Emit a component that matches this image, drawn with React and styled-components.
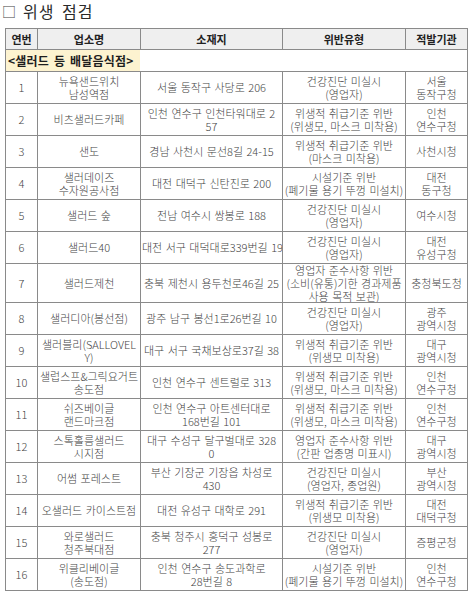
import React from "react";
import styled, { createGlobalStyle } from "styled-components";

const Global = createGlobalStyle`
  html, body { margin: 0; padding: 0; background: #fff; }
  body { font-family: "Noto Sans CJK KR", "Noto Sans", sans-serif; color: #333; }
`;

const Page = styled.div`
  width: 474px;
  padding: 0 0 0 5px;
  box-sizing: border-box;
`;

const Title = styled.h1`
  margin: 0 0 0 -3px;
  height: 28px;
  display: flex;
  align-items: flex-start;
  gap: 7px;
  font-size: 16px;
  line-height: 22px;
  font-weight: 400;
  color: #2a2a2a;
  letter-spacing: 1px;
  word-spacing: 3px;
`;

const Square = styled.span`
  font-size: 14px;
  color: #444;
  letter-spacing: 0;
`;

const Table = styled.table`
  width: 462px;
  table-layout: fixed;
  border-collapse: collapse;
  border: 1px solid #6f6f6f;
  font-size: 11px;
`;

const HeadCell = styled.th`
  height: 20px;
  padding: 0;
  background: #efefef;
  border: 1px solid #8a8a8a;
  font-weight: 700;
  color: #222;
  text-align: center;
  vertical-align: middle;
  line-height: 13px;
`;

const CategoryCell = styled.td`
  height: 21px;
  padding: 0;
  border: 1px solid #8a8a8a;
  text-align: left;
  vertical-align: middle;
  line-height: 13px;
`;

const Highlight = styled.span`
  display: inline-flex;
  align-items: center;
  height: 21px;
  padding: 0 6px 0 2px;
  background: #fdf3d0;
  font-size: 12px;
  font-weight: 700;
  color: #1e1e1e;
  letter-spacing: 0.2px;
  word-spacing: 2px;
  vertical-align: middle;
`;

const Cell = styled.td`
  height: 31px;
  padding: 0 1px;
  border: 1px solid #8a8a8a;
  text-align: center;
  vertical-align: middle;
  line-height: 12.8px;
  font-weight: 300;
  color: #444;
  white-space: nowrap;
  overflow: hidden;
  word-spacing: 1px;
`;

const cols = [32, 103, 142, 123, 62];

const rows = [
  ["1", ["뉴욕샌드위치", "남성역점"], ["서울 동작구 사당로 206"], ["건강진단 미실시", "(영업자)"], ["서울", "동작구청"]],
  ["2", ["비츠샐러드카페"], ["인천 연수구 인천타워대로 2", "57"], ["위생적 취급기준 위반", "(위생모, 마스크 미착용)"], ["인천", "연수구청"]],
  ["3", ["샌도"], ["경남 사천시 문선8길 24-15"], ["위생적 취급기준 위반", "(마스크 미착용)"], ["사천시청"]],
  ["4", ["샐러데이즈", "수자원공사점"], ["대전 대덕구 신탄진로 200"], ["시설기준 위반", "(폐기물 용기 뚜껑 미설치)"], ["대전", "동구청"]],
  ["5", ["샐러드 숲"], ["전남 여수시 쌍봉로 188"], ["건강진단 미실시", "(영업자)"], ["여수시청"]],
  ["6", ["샐러드40"], ["대전 서구 대덕대로339번길 19"], ["건강진단 미실시", "(영업자)"], ["대전", "유성구청"]],
  ["7", ["샐러드제천"], ["충북 제천시 용두천로46길 25"], ["영업자 준수사항 위반", "(소비(유통)기한 경과제품", "사용 목적 보관)"], ["충청북도청"]],
  ["8", ["샐러디아(봉선점)"], ["광주 남구 봉선1로26번길 10"], ["건강진단 미실시", "(영업자)"], ["광주", "광역시청"]],
  ["9", ["샐러블리(SALLOVEL", "Y)"], ["대구 서구 국채보상로37길 38"], ["위생적 취급기준 위반", "(위생모 미착용)"], ["대구", "광역시청"]],
  ["10", ["샐럽스프&그릭요거트", "송도점"], ["인천 연수구 센트럴로 313"], ["위생적 취급기준 위반", "(위생모, 마스크 미착용)"], ["인천", "연수구청"]],
  ["11", ["쉬즈베이글", "랜드마크점"], ["인천 연수구 아트센터대로", "168번길 101"], ["위생적 취급기준 위반", "(위생모, 마스크 미착용)"], ["인천", "연수구청"]],
  ["12", ["스톡홀름샐러드", "시지점"], ["대구 수성구 달구벌대로 328", "0"], ["영업자 준수사항 위반", "(간판 업종명 미표시)"], ["대구", "광역시청"]],
  ["13", ["어썸 포레스트"], ["부산 기장군 기장읍 차성로", "430"], ["건강진단 미실시", "(영업자, 종업원)"], ["부산", "광역시청"]],
  ["14", ["오샐러드 카이스트점"], ["대전 유성구 대학로 291"], ["위생적 취급기준 위반", "(위생모 미착용)"], ["대전", "대덕구청"]],
  ["15", ["와로샐러드", "청주북대점"], ["충북 청주시 흥덕구 성봉로", "277"], ["건강진단 미실시", "(영업자)"], ["증평군청"]],
  ["16", ["위클리베이글", "(송도점)"], ["인천 연수구 송도과학로", "28번길 8"], ["시설기준 위반", "(폐기물 용기 뚜껑 미설치)"], ["인천", "연수구청"]],
];

const Lines = ({ lines }) =>
  lines.map((l, i) => (
    <React.Fragment key={i}>
      {i > 0 && <br />}
      {l}
    </React.Fragment>
  ));

export default function App() {
  return (
    <Page>
      <Global />
      <Title>
        <Square>□</Square>
        <span>위생 점검</span>
      </Title>
      <Table>
        <colgroup>
          {cols.map((w, i) => (
            <col key={i} style={{ width: w }} />
          ))}
        </colgroup>
        <thead>
          <tr>
            <HeadCell>연번</HeadCell>
            <HeadCell>업소명</HeadCell>
            <HeadCell>소재지</HeadCell>
            <HeadCell>위반유형</HeadCell>
            <HeadCell>적발기관</HeadCell>
          </tr>
        </thead>
        <tbody>
          <tr>
            <CategoryCell colSpan={5}>
              <Highlight>&lt;샐러드 등 배달음식점&gt;</Highlight>
            </CategoryCell>
          </tr>
          {rows.map(([no, name, addr, type, agency]) => (
            <tr key={no}>
              <Cell>{no}</Cell>
              <Cell><Lines lines={name} /></Cell>
              <Cell><Lines lines={addr} /></Cell>
              <Cell><Lines lines={type} /></Cell>
              <Cell><Lines lines={agency} /></Cell>
            </tr>
          ))}
        </tbody>
      </Table>
    </Page>
  );
}
